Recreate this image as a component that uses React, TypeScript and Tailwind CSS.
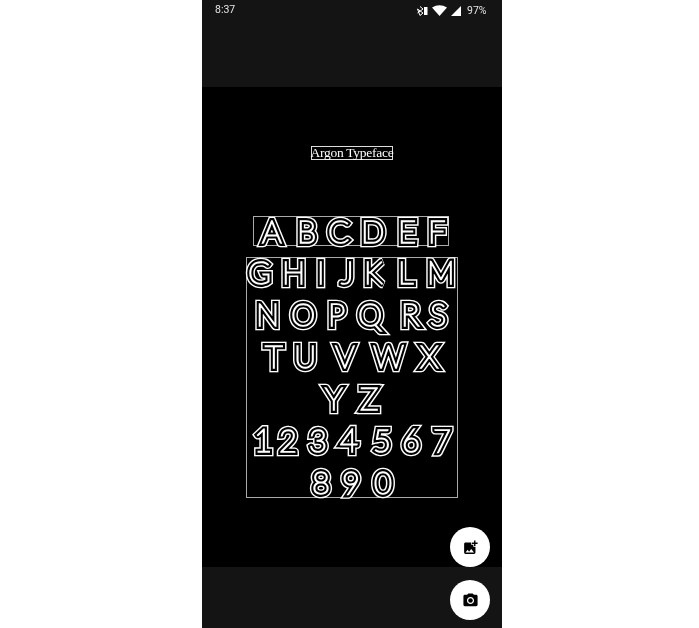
import { MdAddPhotoAlternate, MdPhotoCamera } from "react-icons/md";

// specimen row: same svg text stroked thick to thin gives the inline look. xs are page x of each glyph
function InlineRow({ text, xs, left, width }: { text: string; xs: number[]; left: number; width: number }) {
  const x = xs.join(" ");
  return (
    <svg
      width={width}
      height={30}
      viewBox={`${left} 0 ${width} 30`}
      strokeLinejoin="miter"
      strokeMiterlimit={2.5}
      className="shrink-0 overflow-visible font-['Lato',sans-serif] text-[31px] font-thin will-change-transform"
    >
      <text x={x} y={25.5} fill="white" stroke="white" strokeWidth={8.6} aria-hidden>
        {text}
      </text>
      <text x={x} y={25.5} fill="black" stroke="black" strokeWidth={5.8} aria-hidden>
        {text}
      </text>
      <text x={x} y={25.5} fill="white" stroke="white" strokeWidth={1.6}>
        {text}
      </text>
    </svg>
  );
}

function StatusIcons() {
  return (
    <div className="flex items-center gap-[4px]">
      <svg width="11" height="10" viewBox="0 0 11 10" className="text-white">
        <path d="M3 0.5 L6 3 L0.5 7 M0.5 3 L6 7 L3 9.5 Z" fill="none" stroke="currentColor" strokeWidth="1" />
        <rect x="7" y="1" width="3.5" height="8" fill="currentColor" />
      </svg>
      <svg width="15" height="11" viewBox="0 0 15 11">
        <path d="M0 2.5 Q7.5 -2 15 2.5 L7.5 11 Z" fill="white" />
      </svg>
      <svg width="10" height="10" viewBox="0 0 10 10">
        <path d="M10 0 V10 H0 Z" fill="white" />
      </svg>
      <span className="ml-[2px] text-[10.5px] text-[#e4e4e4] will-change-transform">97%</span>
    </div>
  );
}

export default function App() {
  return (
    <div className="flex h-[628px] w-[699px] overflow-hidden bg-white pl-[202px] font-['Roboto',sans-serif]">
      <div className="relative flex w-[300px] flex-col bg-black">
        <div className="flex h-[87px] items-start justify-between bg-[#141414] px-[13px] pt-[3px] pr-[16px]">
          <span className="text-[10.5px] leading-[14px] text-[#e4e4e4] will-change-transform">8:37</span>
          <StatusIcons />
        </div>

        <div className="flex flex-1 flex-col items-center">
          <div className="mt-[59px] flex h-[14px] w-[82px] items-center justify-center border border-[#dddddd] font-['Liberation_Serif',serif] text-[13.5px] leading-none tracking-[-0.25px] whitespace-nowrap text-white will-change-transform">
            Argon Typeface
          </div>

          <div className="mt-[56px] mr-[2px] flex h-[30px] w-[196px] flex-col border border-[#aaaaaa]">
            <InlineRow text="ABCDEF" left={253} width={194} xs={[261, 296, 327, 360, 397, 427]} />
          </div>

          <div className="mt-[11px] flex h-[241px] w-[212px] flex-col gap-[12px] border border-[#aaaaaa]">
            <InlineRow text="GHIJKLM" left={247} width={210} xs={[248, 282, 317, 341, 364, 398, 427]} />
            <InlineRow text="NOPQRS" left={247} width={210} xs={[256, 291, 328, 358, 401, 430]} />
            <InlineRow text="TUVWX" left={247} width={210} xs={[265, 294, 335, 373, 420]} />
            <InlineRow text="YZ" left={247} width={210} xs={[325, 360]} />
            <InlineRow text="1234567" left={247} width={210} xs={[254, 279, 309, 340, 373, 402, 433]} />
            <InlineRow text="890" left={247} width={210} xs={[312, 342, 374]} />
          </div>
        </div>

        <div className="h-[61px] bg-[#141414]" />

        <button className="absolute top-[527px] left-[248px] flex h-[40px] w-[40px] items-center justify-center rounded-full bg-white text-black">
          <MdAddPhotoAlternate size={17} />
        </button>
        <button className="absolute top-[580px] left-[248px] flex h-[40px] w-[40px] items-center justify-center rounded-full bg-white text-black">
          <MdPhotoCamera size={17} />
        </button>
      </div>
    </div>
  );
}
